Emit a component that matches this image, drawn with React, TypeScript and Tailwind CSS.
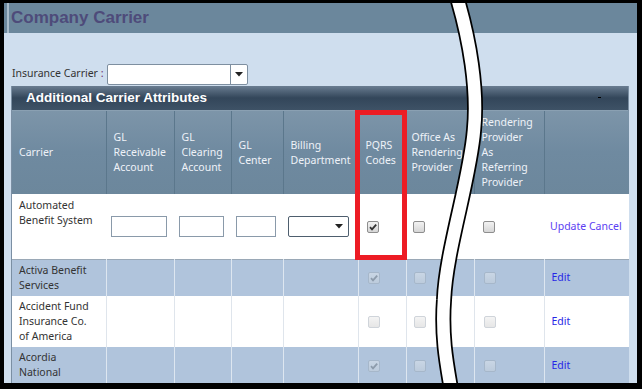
import React from "react";

const font = { fontFamily: '"Noto Sans", "Open Sans", sans-serif' };

function Cb({ checked, disabled, blue }: { checked?: boolean; disabled?: boolean; blue?: boolean }) {
  const box = disabled
    ? blue
      ? "border-[#a6b7ca] bg-gradient-to-b from-[#c9d6e5] to-[#bccbdc]"
      : "border-[#cfd4da] bg-gradient-to-b from-[#f4f4f4] to-[#e6e6e6]"
    : "border-[#8e8e8e] bg-gradient-to-b from-[#f2f2f2] to-[#d6d6d6]";
  const stroke = disabled ? (blue ? "#8d9bab" : "#aaaaaa") : "#333333";
  return (
    <span className={`inline-flex w-[12px] h-[12px] rounded-[2px] border ${box} items-center justify-center align-middle`}>
      {checked && (
        <svg width="10" height="10" viewBox="0 0 10 10">
          <path d="M2 5.2 L4 7.3 L8.2 2.6" stroke={stroke} strokeWidth="1.8" fill="none" />
        </svg>
      )}
    </span>
  );
}

const cols = [94, 68, 57, 52, 75, 48, 68, 70, 85];

export default function App() {
  const th =
    "border-r border-[#5b778c] px-[7px] text-left font-normal text-[#eef2f8] text-[10.5px] leading-[15px] align-middle";
  const tdW = "border-r border-[#dfe5ec]";
  const tdB = "border-r border-[#dde6f0]";
  return (
    <div
      className="relative w-[642px] h-[389px] border-l-4 border-t-[3px] border-r-[5px] border-b-[6px] border-black bg-[#cfdeee] overflow-hidden flex flex-col"
      style={font}
    >
      {/* page header */}
      <div className="h-[30px] shrink-0 bg-[#6b879c] flex items-stretch">
        <div className="w-[3px]" />
        <div className="w-[2px] bg-[#a9bccb]" />
        <div
          className="ml-[2px] flex items-center text-[17px] font-bold text-[#4e4b7a]"
          style={{ fontFamily: '"Liberation Sans", Arial, sans-serif' }}
        >
          Company Carrier
        </div>
      </div>

      {/* body */}
      <div className="pl-[7px] pr-[8px] flex flex-col">
        <div className="mt-[31px] h-[20px] flex items-center">
          <span className="ml-px text-[10.5px] text-[#333]">
            Insurance Carrier <span className="text-[#6b2a6b]">:</span>
          </span>
          <div className="ml-[3px] w-[141px] h-[21px] bg-white border border-[#7e8fa0] rounded-[2px] flex">
            <div className="flex-1" />
            <div className="w-[17px] border-l border-[#7e8fa0] flex items-center justify-center">
              <svg width="8" height="5" viewBox="0 0 8 5">
                <path d="M0 0 L8 0 L4 4.5 Z" fill="#222" />
              </svg>
            </div>
          </div>
        </div>

        {/* grid */}
        <div className="mt-[2px] w-[618px] border-l border-r border-[#7b8fa3]">
          <div className="relative h-[25px] bg-gradient-to-b from-[#6a7d91] via-[#33465a] to-[#3e5266] flex items-center border-b border-[#8aa0b2]">
            <span
              className="ml-[14px] text-white font-bold text-[13.5px]"
              style={{ fontFamily: '"Liberation Sans", Arial, sans-serif' }}
            >
              Additional Carrier Attributes
            </span>
            <span className="absolute left-[586px] top-[11px] w-[3px] h-px bg-black" />
          </div>
          <table className="table-fixed border-collapse w-[616px]">
            <colgroup>
              {cols.map((w, i) => (
                <col key={i} style={{ width: w }} />
              ))}
            </colgroup>
            <thead>
              <tr className="h-[83px] bg-gradient-to-b from-[#7d95a9] via-[#6f8aa0] to-[#6c879c]">
                <th className={th}>Carrier</th>
                <th className={th}>GL<br />Receivable<br />Account</th>
                <th className={th}>GL<br />Clearing<br />Account</th>
                <th className={th}>GL<br />Center</th>
                <th className={th}>Billing<br />Department</th>
                <th className={th}>PQRS<br />Codes</th>
                <th className={th + " !pl-[5px]"}>Office As<br />Rendering<br />Provider</th>
                <th className={th}>Rendering<br />Provider<br />As<br />Referring<br />Provider</th>
                <th className="px-[7px]" />
              </tr>
            </thead>
            <tbody className="text-[10.5px] leading-[15px] text-[#333]">
              <tr className="h-[65px] bg-white border-b border-[#9aa8b6]">
                <td className="px-[7px] pt-[4px] align-top">Automated<br />Benefit System</td>
                <td className="pl-[5px] align-middle">
                  <div className="w-[56px] h-[21px] border border-[#8a9aaa] bg-white" />
                </td>
                <td className="pl-[5px] align-middle">
                  <div className="w-[45px] h-[21px] border border-[#8a9aaa] bg-white" />
                </td>
                <td className="pl-[5px] align-middle">
                  <div className="w-[40px] h-[21px] border border-[#8a9aaa] bg-white" />
                </td>
                <td className="pl-[5px] align-middle">
                  <div className="w-[61px] h-[21px] border border-[#4e5e6e] rounded-[2px] bg-white flex items-center justify-end pr-[5px]">
                    <svg width="8" height="5" viewBox="0 0 8 5">
                      <path d="M0 0 L8 0 L4 4.5 Z" fill="#222" />
                    </svg>
                  </div>
                </td>
                <td className="pl-[9px] align-middle"><Cb checked /></td>
                <td className="pl-[7px] align-middle"><Cb /></td>
                <td className="pl-[9px] align-middle"><Cb /></td>
                <td className="pl-[6px] align-middle text-[#5b3ef2]">Update Cancel</td>
              </tr>
              <tr className="h-[37px] bg-[#b0c4dc]">
                <td className={tdB + " px-[7px] py-[3px] align-top"}>Activa Benefit<br />Services</td>
                <td className={tdB} />
                <td className={tdB} />
                <td className={tdB} />
                <td className={tdB} />
                <td className={tdB + " pl-[9px] align-middle"}><Cb checked disabled blue /></td>
                <td className={tdB + " pl-[7px] align-middle"}><Cb disabled blue /></td>
                <td className={tdB + " pl-[9px] align-middle"}><Cb disabled blue /></td>
                <td className="pl-[7px] align-middle text-[#2626e6]">Edit</td>
              </tr>
              <tr className="h-[51px] bg-white">
                <td className={tdW + " px-[7px] py-[3px] align-top"}>Accident Fund<br />Insurance Co.<br />of America</td>
                <td className={tdW} />
                <td className={tdW} />
                <td className={tdW} />
                <td className={tdW} />
                <td className={tdW + " pl-[9px] align-middle"}><Cb disabled /></td>
                <td className={tdW + " pl-[7px] align-middle"}><Cb disabled /></td>
                <td className={tdW + " pl-[9px] align-middle"}><Cb disabled /></td>
                <td className="pl-[7px] align-middle text-[#2626e6]">Edit</td>
              </tr>
              <tr className="h-[37px] bg-[#b0c4dc]">
                <td className={tdB + " px-[7px] py-[3px] align-top"}>Acordia<br />National</td>
                <td className={tdB} />
                <td className={tdB} />
                <td className={tdB} />
                <td className={tdB} />
                <td className={tdB + " pl-[9px] align-middle"}><Cb checked disabled blue /></td>
                <td className={tdB + " pl-[7px] align-middle"}><Cb disabled blue /></td>
                <td className={tdB + " pl-[9px] align-middle"}><Cb disabled blue /></td>
                <td className="pl-[7px] align-middle text-[#2626e6]">Edit</td>
              </tr>
            </tbody>
          </table>
        </div>
      </div>

      {/* red highlight box */}
      <div className="absolute left-[351px] top-[107px] w-[52px] h-[150px] border-[5px] border-[#ed1c24]" />

      {/* torn cut */}
      <svg className="absolute -left-[4px] -top-[3px] pointer-events-none" width="642" height="389" viewBox="0 0 642 389">
        <path
          d="M456,-6 C470,40 478,90 474,130 C470,180 446,250 444,300 C441,340 448,370 452,395"
          stroke="#000"
          strokeWidth="16"
          fill="none"
        />
        <path
          d="M456,-6 C470,40 478,90 474,130 C470,180 446,250 444,300 C441,340 448,370 452,395"
          stroke="#fff"
          strokeWidth="12.5"
          fill="none"
        />
      </svg>
    </div>
  );
}
